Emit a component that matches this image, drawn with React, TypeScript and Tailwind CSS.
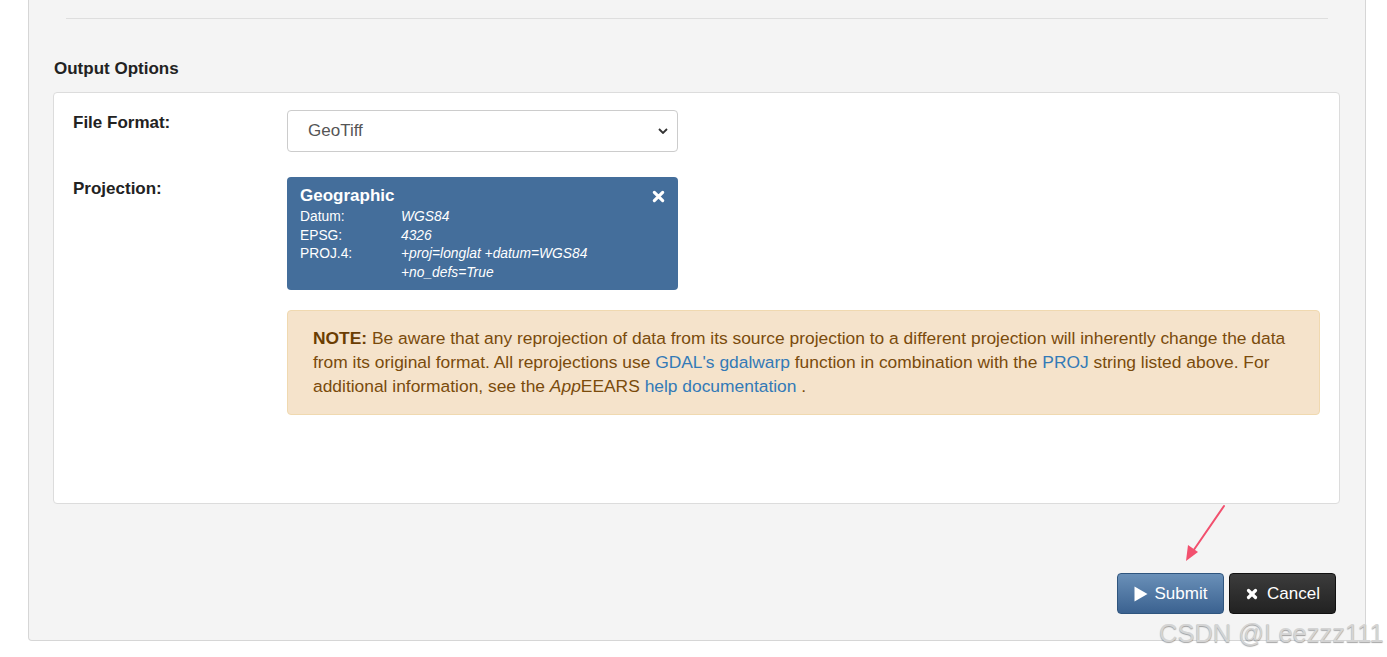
import { X } from "lucide-react";

const projRows = [
  { label: "Datum:", value: "WGS84" },
  { label: "EPSG:", value: "4326" },
  { label: "PROJ.4:", value: "+proj=longlat +datum=WGS84 +no_defs=True" },
];

const ProjectionCard = () => (
  <div className="w-[391px] rounded-[4px] bg-[#446e9b] px-[13px] pt-[8px] pb-[8px] text-white">
    <div className="flex items-center justify-between">
      <span className="text-[17px] font-bold leading-[22px]">Geographic</span>
      <svg viewBox="0 0 14 14" className="h-[13px] w-[13px]" fill="none">
        <path d="M2.5 2.5 L11.5 11.5 M11.5 2.5 L2.5 11.5" stroke="white" strokeWidth="3.4" strokeLinecap="round" />
      </svg>
    </div>
    <div className="mt-[1px] text-[13.8px] leading-[18.5px]">
      {projRows.map((row) => (
        <div key={row.label} className="flex">
          <span className="w-[101px] shrink-0">{row.label}</span>
          <span className="w-[205px] italic">{row.value}</span>
        </div>
      ))}
    </div>
  </div>
);

const Note = () => (
  <div className="mr-[19px] rounded-[4px] border border-[#f0d9b0] bg-[#f5e3cb] px-[25px] pt-[15px] pb-[16px] text-[17.4px] leading-[24px] text-[#7a4b0c]">
    <b className="text-[#6b3d02]">NOTE:</b> Be aware that any reprojection of data from its source projection to a
    different projection will inherently change the data from its original format. All reprojections use{" "}
    <a className="text-[#337ab7]">GDAL's gdalwarp</a> function in combination with the{" "}
    <a className="text-[#337ab7]">PROJ</a> string listed above. For additional information, see the <i>App</i>EEARS{" "}
    <a className="text-[#337ab7]">help documentation</a> .
  </div>
);

export default function App() {
  return (
    <div className="relative h-[657px] w-[1387px] overflow-hidden bg-white font-['Liberation_Sans',Arial,sans-serif] text-[#222]">
      <div className="ml-[28px] flex h-[641px] w-[1338px] flex-col rounded-b-[4px] border-x border-b border-[#d6d6d6] bg-[#f4f4f4]">
        <div className="mx-[37px] mt-[18px] h-px bg-[#dedede]" />
        <h3 className="mt-[39px] ml-[25px] text-[17px] font-bold leading-[22px] text-[#222]">Output Options</h3>
        <div className="mt-[12px] ml-[24px] mr-[25px] h-[412px] rounded-[4px] border border-[#dcdcdc] bg-white pt-[17px] pl-[19px]">
          <div className="flex">
            <label className="mt-[1px] w-[214px] shrink-0 text-[17px] font-bold leading-[24px]">File Format:</label>
            <div className="flex h-[42px] w-[391px] items-center justify-between rounded-[4px] border border-[#cccccc] bg-white pl-[20px] pr-[9px] text-[17px] text-[#555]">
              <span>GeoTiff</span>
              <svg viewBox="0 0 10 6" className="h-[6px] w-[10px]" fill="none">
                <path d="M1 1 L5 5 L9 1" stroke="#333" strokeWidth="1.8" />
              </svg>
            </div>
          </div>
          <div className="mt-[25px] flex">
            <label className="mt-0 w-[214px] shrink-0 text-[17px] font-bold leading-[24px]">Projection:</label>
            <div className="flex flex-1 flex-col gap-[20px]">
              <ProjectionCard />
              <Note />
            </div>
          </div>
        </div>
        <div className="mt-[69px] mr-[29px] flex justify-end gap-[5px]">
          <button className="flex h-[41px] w-[107px] items-center justify-center gap-[7px] rounded-[4px] border border-[#2f557e] bg-gradient-to-b from-[#6a90b8] to-[#3b6290] text-[17px] text-white">
            <svg viewBox="0 0 14 16" className="h-[16px] w-[14px]">
              <path d="M0.5 0.5 L13.5 8 L0.5 15.5 Z" fill="white" />
            </svg>
            Submit
          </button>
          <button className="flex h-[41px] w-[107px] items-center justify-center gap-[8px] rounded-[4px] border border-[#111] bg-gradient-to-b from-[#3c3c3c] to-[#222] text-[17px] text-white">
            <X className="h-[14px] w-[14px]" strokeWidth={5.5} />
            Cancel
          </button>
        </div>
      </div>

      {/* annotation arrow */}
      <svg className="absolute left-[1180px] top-[503px] h-[62px] w-[50px]" viewBox="0 0 50 62" fill="none">
        <path d="M44 3 L11 51" stroke="#f2506e" strokeWidth="2" strokeLinecap="round" />
        <path d="M6 58 L8 42 L18 49 Z" fill="#f2506e" />
      </svg>

      {/* watermark */}
      <div className="absolute left-[1159px] top-[617px] text-[25.5px] leading-[32px] text-[#d4d4d4] [text-shadow:0_1px_1px_rgba(0,0,0,0.35)]">
        CSDN @Leezzz111
      </div>
    </div>
  );
}
